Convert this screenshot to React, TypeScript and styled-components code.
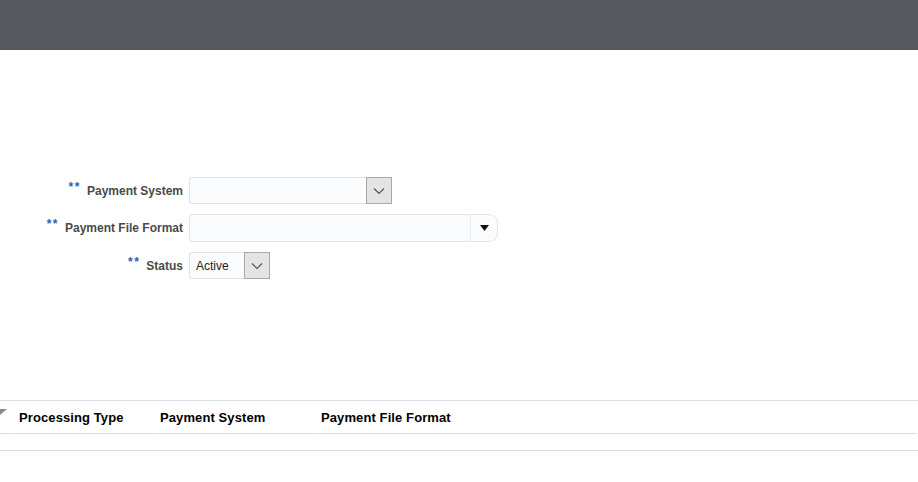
import React from "react";
import styled, { createGlobalStyle } from "styled-components";

const Global = createGlobalStyle`
  html, body { margin: 0; padding: 0; background: #ffffff; }
  body { font-family: "Liberation Sans", Arial, sans-serif; }
  * { box-sizing: border-box; }
`;

const Page = styled.div`
  width: 918px;
  height: 482px;
  overflow: hidden;
  background: #ffffff;
`;

const TopBar = styled.div`
  height: 50px;
  background: #55585d;
`;

const Form = styled.div`
  display: grid;
  grid-template-columns: 183px auto;
  column-gap: 6px;
  row-gap: 10px;
  align-items: center;
  justify-items: start;
  margin-top: 127px;
`;

const Label = styled.label`
  justify-self: end;
  font-size: 12px;
  font-weight: bold;
  color: #4a4a4a;
  white-space: nowrap;
  display: flex;
  align-items: center;
`;

const Req = styled.span`
  color: #2a62b0;
  font-size: 12px;
  font-weight: bold;
  position: relative;
  top: -4px;
  margin-right: 6px;
  letter-spacing: 1.5px;
`;

const Field = styled.div<{ $w: number; $h?: number }>`
  display: flex;
  width: ${(p) => p.$w}px;
  height: ${(p) => p.$h ?? 27}px;
`;

const Box = styled.div`
  flex: 1;
  border: 1px solid #dfe4e8;
  border-right: none;
  background: #fbfcfd;
  border-radius: 3px 0 0 3px;
  font-size: 12px;
  color: #222;
  display: flex;
  align-items: center;
  padding-left: 6px;
  padding-top: 1px;
`;

const GrayButton = styled.div`
  width: 26px;
  height: 100%;
  background: #e4e4e4;
  border: 1px solid #a8a8a8;
  display: flex;
  align-items: center;
  justify-content: center;
`;

const RoundButton = styled.div`
  width: 28px;
  height: 100%;
  background: #fbfcfd;
  border: 1px solid #dfe4e8;
  border-left: 1px solid #e6eaee;
  border-radius: 0 9px 9px 0;
  display: flex;
  align-items: center;
  justify-content: center;
`;

const Chevron = () => (
  <svg width="12" height="8" viewBox="0 0 12 8">
    <path d="M1 1.5 L6 6.5 L11 1.5" fill="none" stroke="#555" strokeWidth="1.2" />
  </svg>
);

const Triangle = () => (
  <svg width="9" height="6" viewBox="0 0 9 6">
    <path d="M0 0 L9 0 L4.5 6 Z" fill="#111" />
  </svg>
);

const Table = styled.div`
  margin-top: 121px;
  border-top: 1px solid #d6dfe6;
`;

const HeaderRow = styled.div`
  display: grid;
  grid-template-columns: 13px 142px 160px 1fr;
  height: 33px;
`;

const HeadCell = styled.div<{ $pad: number }>`
  display: flex;
  align-items: center;
  padding-left: ${(p) => p.$pad}px;
  font-size: 13px;
  font-weight: bold;
  color: #000;
  border-bottom: 1px solid #d6dfe6;
  margin-right: 1px;
  white-space: nowrap;
  letter-spacing: 0.1px;
`;

const SortCell = styled.div`
  border-bottom: 1px solid #d6dfe6;
  margin-right: 1px;
  position: relative;
`;

const SortMark = styled.svg`
  position: absolute;
  left: 0;
  top: 8px;
`;

const EmptyRow = styled.div`
  height: 17px;
  border-bottom: 1px solid #d6dfe6;
`;

export default function App() {
  return (
    <Page>
      <Global />
      <TopBar />
      <Form>
        <Label>
          <Req>**</Req>Payment System
        </Label>
        <Field $w={203}>
          <Box />
          <GrayButton>
            <Chevron />
          </GrayButton>
        </Field>
        <Label>
          <Req>**</Req>Payment File Format
        </Label>
        <Field $w={309} $h={28}>
          <Box />
          <RoundButton>
            <Triangle />
          </RoundButton>
        </Field>
        <Label>
          <Req>**</Req>Status
        </Label>
        <Field $w={81}>
          <Box>Active</Box>
          <GrayButton>
            <Chevron />
          </GrayButton>
        </Field>
      </Form>
      <Table>
        <HeaderRow>
          <SortCell>
            <SortMark width="7" height="6" viewBox="0 0 7 6">
              <path d="M0 0 L7 0 L0 6 Z" fill="#8a8a8a" />
            </SortMark>
          </SortCell>
          <HeadCell $pad={6}>Processing Type</HeadCell>
          <HeadCell $pad={5}>Payment System</HeadCell>
          <HeadCell $pad={6}>Payment File Format</HeadCell>
        </HeaderRow>
        <EmptyRow />
      </Table>
    </Page>
  );
}
